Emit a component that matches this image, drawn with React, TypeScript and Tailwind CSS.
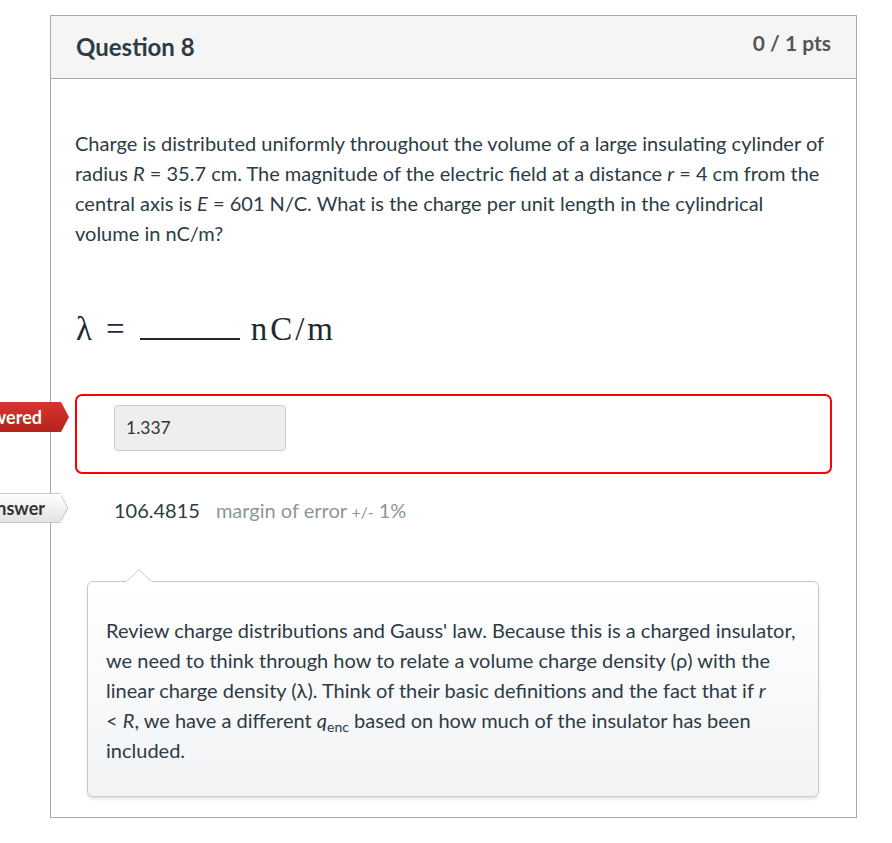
import React from "react";

function WrongLabel() {
  return (
    <div className="absolute right-full mr-[6px] top-[8px] flex items-stretch h-[30px]">
      <div className="flex items-center pl-3 pr-[19px] bg-gradient-to-b from-[#d6362f] to-[#b5231e] text-white font-bold text-[18px] whitespace-nowrap rounded-l-sm">
        You Answered
      </div>
      <svg width="8" height="30" viewBox="0 0 8 30" className="block">
        <defs>
          <linearGradient id="rg" x1="0" y1="0" x2="0" y2="1">
            <stop offset="0" stopColor="#d6362f" />
            <stop offset="1" stopColor="#b5231e" />
          </linearGradient>
        </defs>
        <polygon points="0,0 8,15 0,30" fill="url(#rg)" />
      </svg>
    </div>
  );
}

function CorrectLabel() {
  return (
    <div className="absolute right-full mr-[6px] top-[-2px] flex items-stretch h-[30px]">
      <div className="flex items-center pl-3 pr-[15px] bg-gradient-to-b from-white to-[#e2e2e2] border border-r-0 border-[#c8c8c8] text-[#333] font-bold text-[18px] whitespace-nowrap">
        Correct Answer
      </div>
      <svg width="9" height="30" viewBox="0 0 9 30" className="block">
        <defs>
          <linearGradient id="gg" x1="0" y1="0" x2="0" y2="1">
            <stop offset="0" stopColor="#ffffff" />
            <stop offset="1" stopColor="#e2e2e2" />
          </linearGradient>
        </defs>
        <polygon points="0,0.5 8,15 0,29.5" fill="url(#gg)" stroke="#c8c8c8" strokeWidth="1" />
        <rect x="0" y="1" width="1" height="28" fill="url(#gg)" />
      </svg>
    </div>
  );
}

export default function App() {
  return (
    <div className="min-h-screen bg-white pt-[15px] pl-[50px] font-['Lato','Noto_Sans',sans-serif] text-[#2d3b45]">
      <div className="w-[807px] border border-[#aaaaaa] bg-white">
        {/* Header */}
        <div className="h-[63px] bg-[#f5f5f5] border-b border-[#aaaaaa] flex items-start justify-between px-[25px]">
          <h2 className="mt-[16px] text-[24px] font-bold leading-[30px] text-[#2d3b45]">Question 8</h2>
          <div className="mt-[13px] text-[21px] font-bold leading-[28px] text-[#555]">0 / 1 pts</div>
        </div>

        {/* Body */}
        <div className="px-[24px] pt-[49px] pb-[20px]">
          <p className="text-[20px] leading-[30px] pr-[4px]">
            Charge is distributed uniformly throughout the volume of a large insulating cylinder of radius{" "}
            <i>R</i> = 35.7 cm. The magnitude of the electric field at a distance <i>r</i> = 4 cm from the
            central axis is <i>E</i> = 601 N/C. What is the charge per unit length in the cylindrical volume in
            nC/m?
          </p>

          <div className="mt-[62px] h-[40px] flex items-center font-['Liberation_Serif','DejaVu_Serif',serif] text-[33px] text-[#1e2a33]">
            <span className="ml-[1px]">λ</span>
            <span className="ml-[14px]">=</span>
            <span className="ml-[15px] mt-[18px] inline-block w-[100px] h-[1.5px] bg-[#1e2a33]" />
            <span className="ml-[11px] tracking-[3px]">nC/m</span>
          </div>

          {/* Your answer */}
          <div className="relative mt-[44px]">
            <WrongLabel />
            <div className="h-[80px] border-2 border-[#ff0000] rounded-[7px] pl-[37px] pt-[9px]">
              <div className="w-[172px] h-[46px] bg-[#eeeeee] border border-[#cccccc] rounded-[4px] flex items-center pl-[11px] text-[17.5px] text-[#333]">
                1.337
              </div>
            </div>
          </div>

          {/* Correct answer */}
          <div className="relative mt-[21px] h-[30px] flex items-center pl-[39px] text-[20px]">
            <CorrectLabel />
            <span className="text-[#2d3b45]">106.4815</span>
            <span className="ml-[16px] text-[#8b969e]">
              margin of error <span className="text-[15.5px]">+/-</span> 1%
            </span>
          </div>

          {/* Comment */}
          <div className="relative mt-[56px] ml-[12px] mr-[13px]">
            <svg width="26" height="13" viewBox="0 0 26 13" className="absolute left-[39px] top-[-12px]">
              <polygon points="0,13 13,0.7 26,13" fill="#ffffff" stroke="#c4cad0" strokeWidth="1" />
              <rect x="0.5" y="12" width="25" height="2" fill="#ffffff" />
            </svg>
            <div className="border border-[#c4cad0] rounded-[6px] bg-gradient-to-b from-white to-[#f2f3f5] shadow-[0_2px_3px_rgba(0,0,0,0.12)] pl-[18px] pr-[17px] pt-[33px] pb-[31px]">
              <p className="text-[20px] leading-[30px] text-[#2d3b45]">
                Review charge distributions and Gauss' law. Because this is a charged insulator, we need to think
                through how to relate a volume charge density (ρ) with the linear charge density (λ). Think of
                their basic definitions and the fact that if <i>r</i> {"<\u00a0"}
                <i>R</i>, we have a different <i>q</i>
                <sub className="text-[14px]">enc</sub> based on how much of the insulator has been included.
              </p>
            </div>
          </div>
        </div>
      </div>
    </div>
  );
}
